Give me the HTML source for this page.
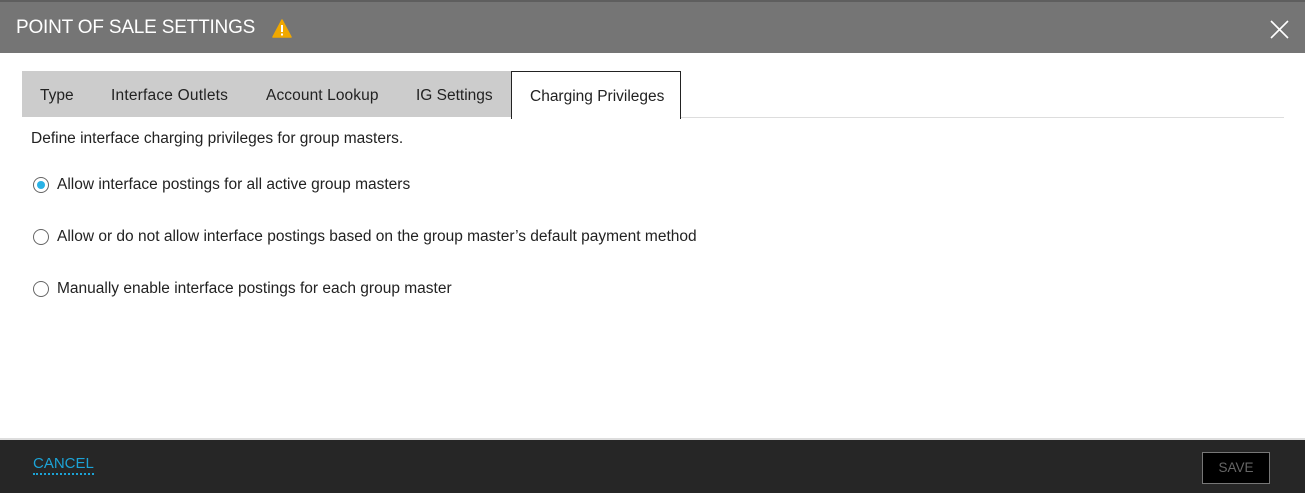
<!DOCTYPE html>
<html><head><style>
body{margin:0;width:1305px;height:491px;position:relative;background:#fff;font-family:"Liberation Sans",sans-serif;overflow:hidden;color:#222}
.hdr{position:absolute;left:0;top:0;width:1305px;height:53px;background:#757575;border-top:2px solid #5e5e5e;box-sizing:border-box}
.title{position:absolute;left:16px;top:15px;color:#fff;font-size:19px;letter-spacing:-0.2px}
.tabs{position:absolute;left:22px;top:71px;width:489px;height:46px;background:#cccccc}
.tab{position:absolute;top:16px;font-size:15.5px;color:#222;white-space:nowrap}
.active{position:absolute;left:511px;top:71px;width:168px;height:47px;border:1px solid #222;border-bottom:none;background:#fff}
.line{position:absolute;left:681px;top:117px;width:603px;height:1px;background:#ddd}
.t{position:absolute;font-size:15.5px;color:#222;white-space:nowrap}
.r{position:absolute;left:33px;width:16px;height:16px;border:1.5px solid #666;border-radius:50%;box-sizing:border-box;background:#fff}
.foot{position:absolute;left:0;top:438px;width:1305px;height:53px;background:#262626;border-top:2px solid #ddd}
</style></head><body>
<div class="hdr"><div class="title">POINT OF SALE SETTINGS</div>
<svg style="position:absolute;left:272px;top:17px" width="20" height="19" viewBox="0 0 20 19"><path d="M10 1 L19 18 L1 18 Z" fill="#f0a800" stroke="#f0a800" stroke-linejoin="round" stroke-width="1.5"/><rect x="9" y="6" width="2" height="7" fill="#fff"/><rect x="9" y="14.5" width="2" height="2" fill="#fff"/></svg>
<svg style="position:absolute;left:1270px;top:18px" width="19" height="19"><path d="M1 1L18 18M18 1L1 18" stroke="#fff" stroke-width="1.6"/></svg>
</div>
<div class="tabs">
<div class="tab" style="left:18px">Type</div>
<div class="tab" style="left:89px;letter-spacing:0.2px">Interface Outlets</div>
<div class="tab" style="left:244px;letter-spacing:0.1px">Account Lookup</div>
<div class="tab" style="left:394px;letter-spacing:0px">IG Settings</div>
</div>
<div class="active"><div class="tab" style="left:18px;top:16px;letter-spacing:0px">Charging Privileges</div></div>
<div class="line"></div>
<div class="t" style="left:31px;top:130px">Define interface charging privileges for group masters.</div>
<div class="r" style="top:177px"><div style="position:absolute;left:2.5px;top:2.5px;width:8px;height:8px;border-radius:50%;background:#29b2e6"></div></div>
<div class="t" style="left:57px;top:176px">Allow interface postings for all active group masters</div>
<div class="r" style="top:229px"></div>
<div class="t" style="left:57px;top:228px">Allow or do not allow interface postings based on the group master’s default payment method</div>
<div class="r" style="top:281px"></div>
<div class="t" style="left:57px;top:280px">Manually enable interface postings for each group master</div>
<div class="foot">
<div style="position:absolute;left:33px;top:15px;color:#1ca3d6;font-size:15px;border-bottom:2px dotted #1ca3d6;line-height:17px;padding-bottom:1px">CANCEL</div>
<div style="position:absolute;left:1202px;top:12px;width:66px;height:30px;background:#000;border:1px solid #777;color:#666;font-size:13.5px;text-align:center;line-height:30px">SAVE</div>
</div>
</body></html>
